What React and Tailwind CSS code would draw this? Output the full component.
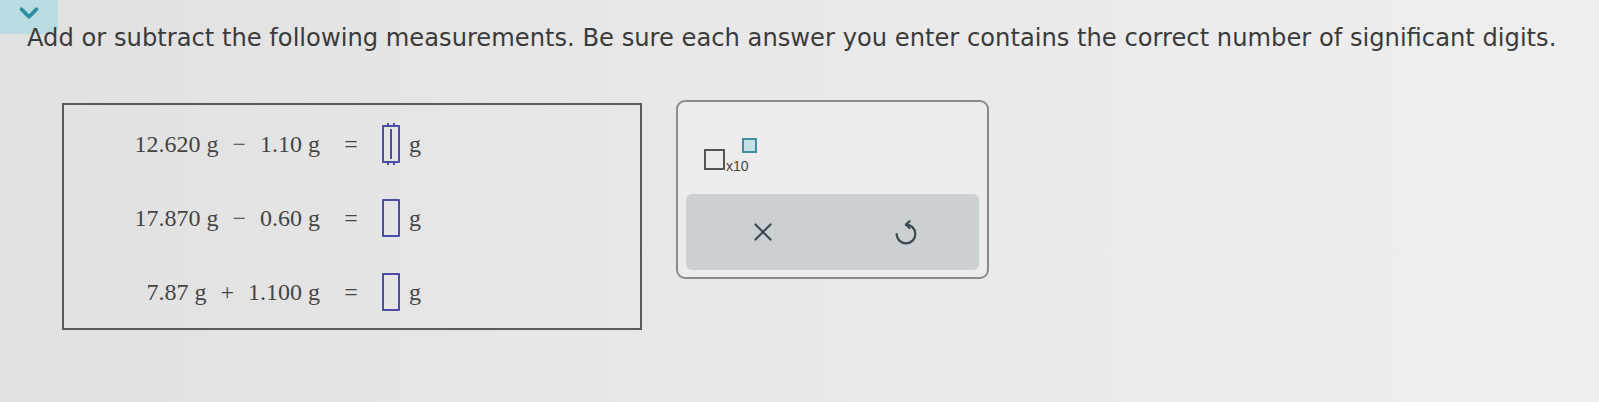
import { ChevronDown, X } from "lucide-react";

const rows = [
    { a: "12.620 g", op: "−", b: "1.10 g", active: true },
    { a: "17.870 g", op: "−", b: "0.60 g" },
    { a: "7.87 g", op: "+", b: "1.100 g" },
];

const AnswerBox = ({ active }) => (
    <div className="relative w-[18px] h-[38px] border-2 border-[#4b4ba8] rounded-[1px]">
        {active && (
            <>
                <div className="absolute left-1/2 top-[2px] bottom-[2px] w-[2px] -translate-x-1/2 bg-[#4b4ba8]" />
                <div className="absolute left-1/2 -top-[4px] w-[8px] h-[4px] -translate-x-1/2 border-x-2 border-[#4b4ba8]" />
                <div className="absolute left-1/2 -bottom-[4px] w-[8px] h-[4px] -translate-x-1/2 border-x-2 border-[#4b4ba8]" />
            </>
        )}
    </div>
);

const UndoIcon = () => (
    <svg width="30" height="30" viewBox="0 0 24 24" fill="none" stroke="#3d4a52" strokeWidth="1.8" strokeLinecap="round" strokeLinejoin="round">
        <path d="M12 4.5 A7.5 7.5 0 1 1 4.5 12" />
        <path d="M14.8 1.8 L12 4.5 L14.8 7.2" />
    </svg>
);

const App = () => {
    return (
        <div className="w-[1599px] h-[402px] bg-gradient-to-r from-[#e1e1e1] via-[#e9e9e9] to-[#efefef] overflow-hidden">
            <div className="w-[58px] h-[34px] bg-[#b9dce2] rounded-br-[8px] flex items-center justify-center">
                <ChevronDown className="w-[30px] h-[30px] text-[#2a8ea0] -mt-[8px]" strokeWidth={3} />
            </div>

            <p className="pl-[27px] -mt-[10px] text-[24.2px] leading-[28px] text-[#3b3b3b]" style={{ fontFamily: '"DejaVu Sans", Verdana, sans-serif' }}>
                Add or subtract the following measurements. Be sure each answer you enter contains the correct number of significant digits.
            </p>

            <div className="flex items-start mt-[51px]">
                <div className="ml-[62px] w-[580px] h-[227px] border-2 border-[#5a5a5a] flex flex-col justify-center gap-[36px] pl-[72px] pt-[2px]" style={{ fontFamily: '"Liberation Serif", "Times New Roman", serif' }}>
                    {rows.map((r, i) => (
                        <div key={i} className="flex items-center text-[24px] text-[#444]">
                            <span className="w-[184px] flex justify-end items-center whitespace-pre">
                                <span>{r.a}</span>
                                <span className="mx-[14px]">{r.op}</span>
                                <span>{r.b}</span>
                            </span>
                            <span className="ml-[24px] w-[14px] text-center">=</span>
                            <span className="ml-[24px]"><AnswerBox active={r.active} /></span>
                            <span className="ml-[9px]">g</span>
                        </div>
                    ))}
                </div>

                <div className="ml-[34px] -mt-[3px] w-[313px] h-[179px] border-2 border-[#8a8a8a] rounded-[9px] bg-[#ececec] flex flex-col px-[8px]">
                    <div className="flex items-end h-[92px] pb-[24px] pl-[18px]">
                        <div className="w-[21px] h-[21px] border-2 border-[#555]" />
                        <span className="text-[14px] text-[#444] leading-none mb-[-3px] ml-[1px]" style={{ fontFamily: '"Liberation Sans", Arial, sans-serif' }}>x10</span>
                        <div className="w-[15px] h-[15px] border-2 border-[#3f8e99] bg-[#c4e2e6] mb-[17px] -ml-[7px]" />
                    </div>
                    <div className="h-[76px] bg-[#cbd0d3] rounded-[6px] flex items-center">
                        <div className="w-[150px] flex justify-center pl-[4px]">
                            <X className="w-[30px] h-[30px] text-[#3d4a52]" strokeWidth={1.8} />
                        </div>
                        <div className="w-[140px] flex justify-center pt-[4px]">
                            <UndoIcon />
                        </div>
                    </div>
                </div>
            </div>
        </div>
    );
};

export default App;
